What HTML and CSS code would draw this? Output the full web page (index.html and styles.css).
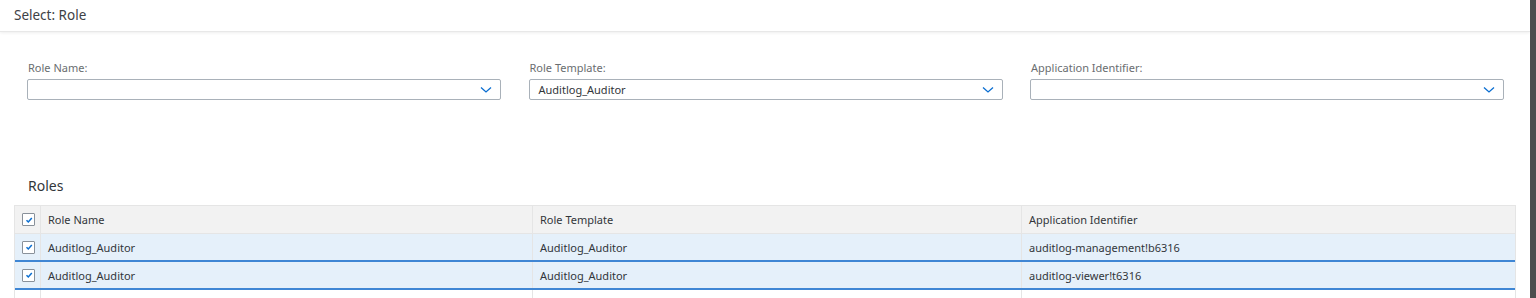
FILE: index.html
```html
<!DOCTYPE html>
<html>
<head>
<meta charset="utf-8">
<link rel="stylesheet" href="styles.css">
</head>
<body>
<div class="screen">
  <div class="dialog">
    <div class="dlg-header">Select: Role</div>
    <div class="filters">
      <div class="field">
        <label>Role Name:</label>
        <div class="combo"><span class="val"></span><svg class="chev" viewBox="0 0 12 8" width="12" height="8"><path d="M1 1.5 L6 6 L11 1.5" fill="none" stroke="#0a6ed1" stroke-width="1.3"/></svg></div>
      </div>
      <div class="field">
        <label>Role Template:</label>
        <div class="combo"><span class="val">Auditlog_Auditor</span><svg class="chev" viewBox="0 0 12 8" width="12" height="8"><path d="M1 1.5 L6 6 L11 1.5" fill="none" stroke="#0a6ed1" stroke-width="1.3"/></svg></div>
      </div>
      <div class="field">
        <label>Application Identifier:</label>
        <div class="combo"><span class="val"></span><svg class="chev" viewBox="0 0 12 8" width="12" height="8"><path d="M1 1.5 L6 6 L11 1.5" fill="none" stroke="#0a6ed1" stroke-width="1.3"/></svg></div>
      </div>
    </div>
    <div class="table-title">Roles</div>
    <div class="table">
      <div class="row head">
        <div class="cell sel"><span class="cb"><svg viewBox="0 0 10 10" width="10" height="10"><path d="M2.5 5.2 L4.3 7 L7.8 3" fill="none" stroke="#0a6ed1" stroke-width="1.5"/></svg></span></div>
        <div class="cell c1">Role Name</div>
        <div class="cell c2">Role Template</div>
        <div class="cell c3">Application Identifier</div>
      </div>
      <div class="row selected">
        <div class="cell sel"><span class="cb"><svg viewBox="0 0 10 10" width="10" height="10"><path d="M2.5 5.2 L4.3 7 L7.8 3" fill="none" stroke="#0a6ed1" stroke-width="1.5"/></svg></span></div>
        <div class="cell c1">Auditlog_Auditor</div>
        <div class="cell c2">Auditlog_Auditor</div>
        <div class="cell c3">auditlog-management!b6316</div>
      </div>
      <div class="row selected">
        <div class="cell sel"><span class="cb"><svg viewBox="0 0 10 10" width="10" height="10"><path d="M2.5 5.2 L4.3 7 L7.8 3" fill="none" stroke="#0a6ed1" stroke-width="1.5"/></svg></span></div>
        <div class="cell c1">Auditlog_Auditor</div>
        <div class="cell c2">Auditlog_Auditor</div>
        <div class="cell c3">auditlog-viewer!t6316</div>
      </div>
      <div class="row empty">
        <div class="cell sel"></div>
        <div class="cell c1"></div>
        <div class="cell c2"></div>
        <div class="cell c3"></div>
      </div>
    </div>
  </div>
  <div class="side"></div>
</div>
</body>
</html>
```
FILE: styles.css
```css
html, body {
  margin: 0;
  padding: 0;
  height: 298px;
  overflow: hidden;
  background: #ffffff;
  font-family: "Noto Sans", "Open Sans", "Liberation Sans", sans-serif;
  color: #32363a;
}
.screen {
  display: flex;
  width: 1536px;
  height: 298px;
}
.dialog {
  width: 1530px;
  background: #ffffff;
  display: flex;
  flex-direction: column;
  overflow: hidden;
}
.dialog > * {
  flex-shrink: 0;
}
.side {
  flex: 1;
  background: #4d4d4d;
}
.dlg-header {
  height: 32px;
  box-sizing: border-box;
  padding: 6px 0 0 14px;
  font-size: 13.5px;
  color: #3e4145;
  border-bottom: 1px solid #e8e8e8;
  box-shadow: 0 1px 3px rgba(0,0,0,0.07);
}
.filters {
  display: grid;
  grid-template-columns: 474px 474px 474px;
  column-gap: 27.5px;
  padding: 28px 0 0 27px;
}
.field label {
  display: block;
  font-size: 11px;
  color: #6a6d70;
  height: 19px;
  padding-left: 1px;
}
.combo {
  height: 21px;
  box-sizing: border-box;
  border: 1px solid #a9b1b9;
  border-radius: 2px;
  display: flex;
  align-items: center;
  padding: 0 8px 0 9px;
}
.combo .val {
  flex: 1;
  font-size: 11px;
  color: #32363a;
}
.chev {
  display: block;
}
.table-title {
  font-size: 14px;
  color: #32363a;
  padding: 76px 0 0 28px;
  height: 29px;
  box-sizing: content-box;
}
.table {
  margin: 0 14px;
  border-left: 1px solid #e5e5e5;
  border-right: 1px solid #e5e5e5;
}
.row {
  display: grid;
  grid-template-columns: 25px 492px 489px 1fr;
  height: 28px;
  box-sizing: border-box;
  border-bottom: 1px solid #e5e5e5;
}
.row.head {
  height: 29px;
  background: #f2f2f2;
  border-top: 1px solid #e5e5e5;
}
.row.selected {
  background: #e5f0fa;
  border-bottom: 2px solid #3f86d4;
}
.cell {
  display: flex;
  align-items: center;
  font-size: 11px;
  color: #32363a;
  padding-left: 7px;
  border-left: 1px solid #e5e5e5;
}
.cell.sel {
  border-left: none;
  padding-left: 7px;
}
.cb {
  width: 13px;
  height: 13px;
  box-sizing: border-box;
  border: 1px solid #89919a;
  border-radius: 1px;
  background: #ffffff;
  display: flex;
  align-items: center;
  justify-content: center;
}
.cb svg { display: block; }
.row.empty { border-bottom: none; }
```
